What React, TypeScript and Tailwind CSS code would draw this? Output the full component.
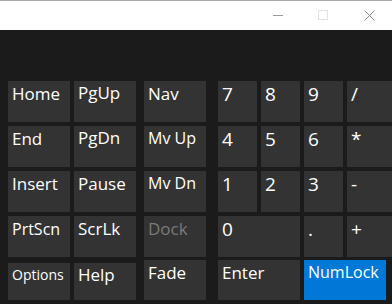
import React from "react";

type K = {
  label: string;
  w: string;
  size?: string;
  extra?: string;
};

const Key = ({ label, w, size = "text-[17px]", extra = "" }: K) => (
  <div
    className={`${w} ${extra} h-full bg-[#333333] text-white leading-none pl-[4px] pt-[4px] ${size}`}
  >
    {label}
  </div>
);

const rows: K[][] = [
  [
    { label: "Home", w: "w-[62px]" },
    { label: "PgUp", w: "w-[62px]", extra: "!pt-[3px]" },
    { label: "Nav", w: "w-[62px]", extra: "ml-[4px]" },
    { label: "7", w: "w-[39px]", size: "text-[19px]", extra: "ml-[8px]" },
    { label: "8", w: "w-[39px]", size: "text-[19px]" },
    { label: "9", w: "w-[39px]", size: "text-[19px]" },
    { label: "/", w: "w-[45px]", size: "text-[19px]" },
  ],
  [
    { label: "End", w: "w-[62px]" },
    { label: "PgDn", w: "w-[62px]", extra: "!pt-[3px]" },
    { label: "Mv Up", w: "w-[62px]", size: "text-[16px]", extra: "ml-[4px]" },
    { label: "4", w: "w-[39px]", size: "text-[19px]", extra: "ml-[8px]" },
    { label: "5", w: "w-[39px]", size: "text-[19px]" },
    { label: "6", w: "w-[39px]", size: "text-[19px]" },
    { label: "*", w: "w-[45px]", size: "text-[19px]" },
  ],
  [
    { label: "Insert", w: "w-[62px]" },
    { label: "Pause", w: "w-[62px]" },
    { label: "Mv Dn", w: "w-[62px]", size: "text-[16px]", extra: "ml-[4px]" },
    { label: "1", w: "w-[39px]", size: "text-[19px]", extra: "ml-[8px]" },
    { label: "2", w: "w-[39px]", size: "text-[19px]" },
    { label: "3", w: "w-[39px]", size: "text-[19px]" },
    { label: "-", w: "w-[45px]", size: "text-[19px]" },
  ],
  [
    { label: "PrtScn", w: "w-[62px]", size: "text-[16px]", extra: "!pt-[5px]" },
    { label: "ScrLk", w: "w-[62px]" },
    { label: "Dock", w: "w-[62px]", extra: "ml-[4px] !text-[#7a7a7a]" },
    { label: "0", w: "w-[82px]", size: "text-[19px]", extra: "ml-[8px]" },
    { label: ".", w: "w-[39px]", size: "text-[19px]" },
    { label: "+", w: "w-[45px]", size: "text-[19px]" },
  ],
];

export default function App() {
  return (
    <div
      className="w-[392px] h-[304px] overflow-hidden bg-[#1b1b1b]"
      style={{ fontFamily: '"Open Sans", "Noto Sans", sans-serif' }}
    >
      <div className="h-[30px] bg-white border-t border-[#aaaaaa] relative">
        <svg className="absolute left-[273px] top-[9px]" width="11" height="11" viewBox="0 0 11 11">
          <line x1="0" y1="5.5" x2="10" y2="5.5" stroke="#9a9a9a" strokeWidth="1" />
        </svg>
        <svg className="absolute left-[318px] top-[9px]" width="11" height="11" viewBox="0 0 11 11">
          <rect x="0.5" y="0.5" width="9" height="9" fill="none" stroke="#e3e3e3" strokeWidth="1" />
        </svg>
        <svg className="absolute left-[364px] top-[9px]" width="11" height="11" viewBox="0 0 11 11">
          <path d="M0.5 0.5 L10.5 10.5 M10.5 0.5 L0.5 10.5" stroke="#8a8a8a" strokeWidth="1" />
        </svg>
      </div>
      <div className="pt-[51px] pl-[8px] flex flex-col gap-[4px]">
        {rows.map((r, i) => (
          <div key={i} className="flex gap-[4px] h-[41px]">
            {r.map((k) => (
              <Key key={k.label} {...k} />
            ))}
          </div>
        ))}
        <div className="flex gap-[4px] h-[40px] -mt-[1px]">
          <div className="w-[62px] mt-[3px] bg-[#333333] text-white text-[14px] leading-none pl-[4px] pt-[5px]">
            Options
          </div>
          <div className="w-[62px] mt-[3px] bg-[#333333] text-white text-[17px] leading-none pl-[4px] pt-[3px]">
            Help
          </div>
          <Key label="Fade" w="w-[62px]" extra="ml-[4px]" />
          <Key label="Enter" w="w-[82px]" extra="ml-[8px]" />
          <Key label="NumLock" w="w-[82px]" extra="!bg-[#0078d7]" size="text-[16px]" />
        </div>
      </div>
    </div>
  );
}
